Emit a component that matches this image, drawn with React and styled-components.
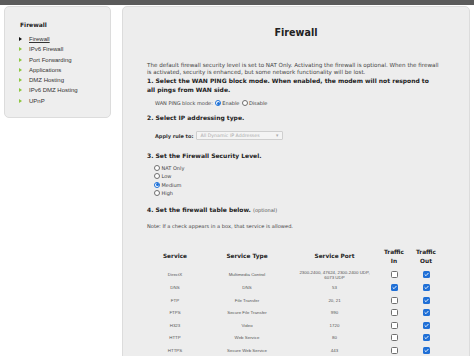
import React from "react";
import styled, { createGlobalStyle } from "styled-components";

const Global = createGlobalStyle`
  html, body { margin: 0; padding: 0; background: #ffffff; }
  body { font-family: "DejaVu Sans", Verdana, sans-serif; color: #333; }
  * { box-sizing: border-box; }
`;

const TopBar = styled.div`
  height: 5px;
  background: #5b5b5b;
`;

const Layout = styled.div`
  display: flex;
  align-items: flex-start;
  gap: 11px;
  padding: 1px 0 0 4px;
`;

const Sidebar = styled.nav`
  width: 107px;
  height: 112px;
  flex: none;
  background: #eeeeee;
  border: 1px solid #dcdcdc;
  border-radius: 5px;
  padding: 14px 0 0 15px;
`;

const SideTitle = styled.div`
  font-family: "DejaVu Sans", Verdana, sans-serif;
  font-weight: bold;
  font-size: 6px;
  line-height: 8px;
  color: #222;
`;

const SideList = styled.ul`
  list-style: none;
  margin: 4.85px 0 0 -1px;
  padding: 0;
`;

const SideItem = styled.li`
  display: flex;
  align-items: center;
  gap: 7px;
  height: 10.3px;
  font-family: "Liberation Sans", Arial, sans-serif;
  font-size: 6px;
  color: #333;
  text-decoration: ${(p) => (p.$active ? "underline" : "none")};
`;

const Arrow = styled.span`
  width: 0;
  height: 0;
  flex: none;
  border-left: 3.5px solid ${(p) => (p.$active ? "#111" : "#8dc63f")};
  border-top: 2.5px solid transparent;
  border-bottom: 2.5px solid transparent;
`;

const Panel = styled.main`
  width: 348px;
  flex: none;
  min-height: 360px;
  background: #ededed;
  border: 1px solid #dcdcdc;
  border-radius: 5px;
  padding: 20px 24px 0 24px;
`;

const Title = styled.h1`
  margin: 0;
  text-align: center;
  font-family: "DejaVu Sans", Verdana, sans-serif;
  font-weight: bold;
  font-size: 9.6px;
  line-height: 12px;
  color: #222;
`;

const Para = styled.p`
  margin: ${(p) => p.$mt ?? 0}px 0 0 0;
  max-width: 294px;
  font-size: ${(p) => p.$size ?? 5.6}px;
  line-height: 7px;
  color: #444;
`;

const Heading = styled.h2`
  margin: ${(p) => p.$mt ?? 0}px 0 0 0;
  max-width: 290px;
  font-family: "DejaVu Sans", Verdana, sans-serif;
  font-weight: bold;
  font-size: 6px;
  line-height: 9px;
  color: #222;
`;

const Optional = styled.span`
  font-weight: normal;
  font-size: 5px;
  color: #555;
`;

const Row = styled.div`
  display: flex;
  align-items: center;
  gap: ${(p) => p.$gap ?? 1}px;
  margin: ${(p) => p.$mt ?? 0}px 0 0 ${(p) => p.$indent ?? 8}px;
  height: ${(p) => p.$h ?? 8}px;
  font-size: 5px;
  color: #444;
`;

const FieldLabel = styled.span`
  font-weight: ${(p) => (p.$bold ? "bold" : "normal")};
  margin-right: ${(p) => p.$mr ?? 0}px;
  color: ${(p) => (p.$bold ? "#333" : "#444")};
`;

const Radio = styled.span`
  width: 6px;
  height: 6px;
  flex: none;
  border-radius: 50%;
  background: #fff;
  border: ${(p) => (p.$on ? "0.9px solid #1a6fd8" : "0.7px solid #6f6f6f")};
  display: flex;
  align-items: center;
  justify-content: center;
  &::after {
    content: "";
    width: 3px;
    height: 3px;
    border-radius: 50%;
    background: ${(p) => (p.$on ? "#1a6fd8" : "transparent")};
  }
`;

const RadioGroup = styled.div`
  margin: 4.35px 0 0 7px;
  display: flex;
  flex-direction: column;
`;

const FakeSelect = styled.span`
  width: 87px;
  height: 9px;
  display: flex;
  align-items: center;
  justify-content: space-between;
  padding: 0 4px 0 3px;
  background: #f4f4f4;
  border: 0.8px solid #cfcfcf;
  border-radius: 1px;
  color: #aaaaaa;
  font-size: 4.7px;
`;

const Table = styled.table`
  margin-top: 18px;
  border-collapse: collapse;
  table-layout: fixed;
  width: 295px;
`;

const Th = styled.th`
  width: ${(p) => p.$w}px;
  padding: 0 0 2px 0;
  font-family: "DejaVu Sans", Verdana, sans-serif;
  font-weight: bold;
  font-size: 5.8px;
  line-height: 9px;
  color: #222;
  text-align: center;
  vertical-align: middle;
`;

const Td = styled.td`
  height: ${(p) => (p.$tall ? 14 : 12.5)}px;
  padding: 0;
  font-family: "Liberation Sans", Arial, sans-serif;
  font-size: 4.4px;
  line-height: 5px;
  color: #555;
  text-align: center;
  vertical-align: middle;
`;

const Box = styled.span`
  display: inline-flex;
  align-items: center;
  justify-content: center;
  width: 7px;
  height: 7px;
  vertical-align: middle;
  border-radius: 1.5px;
  background: ${(p) => (p.$on ? "#1f6fd6" : "#fff")};
  border: ${(p) => (p.$on ? "none" : "0.8px solid #6f6f6f")};
`;

const Checkbox = ({ on }) => (
  <Box $on={on}>
    {on && (
      <svg width="5" height="5" viewBox="0 0 10 10">
        <polyline points="1.8,5.2 4,7.4 8.3,2.6" fill="none" stroke="#fff" strokeWidth="1.8" strokeLinecap="round" strokeLinejoin="round" />
      </svg>
    )}
  </Box>
);

const side = ["Firewall", "IPv6 Firewall", "Port Forwarding", "Applications", "DMZ Hosting", "IPv6 DMZ Hosting", "UPnP"];

const rows = [
  ["DirectX", "Multimedia Control", ["2300-2400, 47624, 2300-2400 UDP,", "6073 UDP"], false, true],
  ["DNS", "DNS", ["53"], true, true],
  ["FTP", "File Transfer", ["20, 21"], false, true],
  ["FTPS", "Secure File Transfer", ["990"], false, true],
  ["H323", "Video", ["1720"], false, true],
  ["HTTP", "Web Service", ["80"], false, true],
  ["HTTPS", "Secure Web Service", ["443"], false, true],
];

export default function App() {
  return (
    <>
      <Global />
      <TopBar />
      <Layout>
        <Sidebar>
          <SideTitle>Firewall</SideTitle>
          <SideList>
            {side.map((s, i) => (
              <SideItem key={s} $active={i === 0}>
                <Arrow $active={i === 0} />
                <span>{s}</span>
              </SideItem>
            ))}
          </SideList>
        </Sidebar>
        <Panel>
          <Title>Firewall</Title>
          <Para $mt={22.5}>
            The default firewall security level is set to NAT Only. Activating the firewall is optional. When the firewall is activated, security is enhanced, but some network functionality will be lost.
          </Para>
          <Heading>
            1. Select the WAN PING block mode. When enabled, the modem will not respond to all pings from WAN side.
          </Heading>
          <Row $mt={5.5}>
            <FieldLabel $mr={1.5}>WAN PING block mode:</FieldLabel>
            <Radio $on />
            <FieldLabel $mr={1.5}>Enable</FieldLabel>
            <Radio />
            <FieldLabel>Disable</FieldLabel>
          </Row>
          <Heading $mt={5.5}>2. Select IP addressing type.</Heading>
          <Row $mt={9} $h={10} $gap={3}>
            <FieldLabel $bold>Apply rule to:</FieldLabel>
            <FakeSelect>
              <span>All Dynamic IP Addresses</span>
              <span>▾</span>
            </FakeSelect>
          </Row>
          <Heading $mt={10}>3. Set the Firewall Security Level.</Heading>
          <RadioGroup>
            {["NAT Only", "Low", "Medium", "High"].map((l) => (
              <Row key={l} $indent={0} $h={8.3} $gap={1.5}>
                <Radio $on={l === "Medium"} />
                <FieldLabel>{l}</FieldLabel>
              </Row>
            ))}
          </RadioGroup>
          <Heading $mt={7.5}>
            4. Set the firewall table below. <Optional>(optional)</Optional>
          </Heading>
          <Para $mt={8} $size={5.1}>
            Note: If a check appears in a box, that service is allowed.
          </Para>
          <Table>
            <thead>
              <tr>
                <Th $w={56}>Service</Th>
                <Th $w={88}>Service Type</Th>
                <Th $w={87}>Service Port</Th>
                <Th $w={32}>Traffic<br />In</Th>
                <Th $w={32}>Traffic<br />Out</Th>
              </tr>
            </thead>
            <tbody>
              {rows.map(([svc, type, port, tin, tout], i) => (
                <tr key={svc}>
                  <Td $tall={i === 0}>{svc}</Td>
                  <Td $tall={i === 0}>{type}</Td>
                  <Td $tall={i === 0}>
                    {port.map((p, k) => (
                      <React.Fragment key={k}>
                        {k > 0 && <br />}
                        {p}
                      </React.Fragment>
                    ))}
                  </Td>
                  <Td $tall={i === 0}><Checkbox on={tin} /></Td>
                  <Td $tall={i === 0}><Checkbox on={tout} /></Td>
                </tr>
              ))}
            </tbody>
          </Table>
        </Panel>
      </Layout>
    </>
  );
}
